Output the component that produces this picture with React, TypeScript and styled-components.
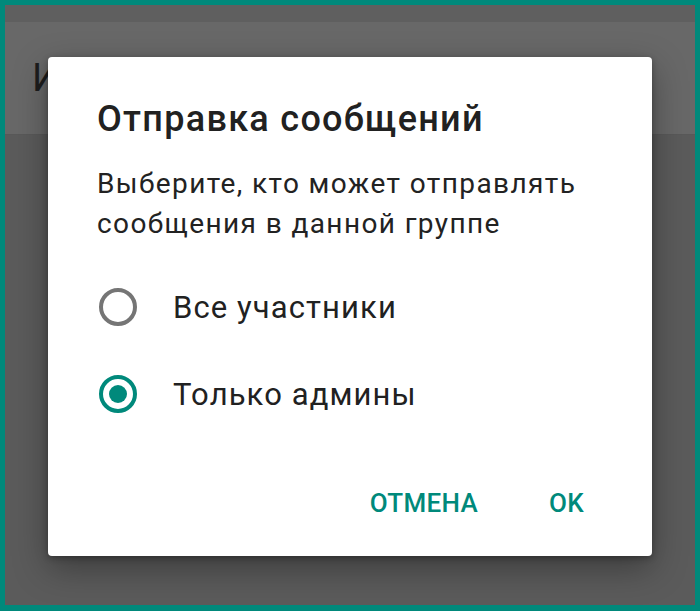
import React, { useState } from "react";
import styled, { createGlobalStyle } from "styled-components";

const Global = createGlobalStyle`
  html, body {
    margin: 0;
    padding: 0;
    font-family: Roboto, "Noto Sans", sans-serif;
  }
`;

const Frame = styled.div`
  position: relative;
  width: 700px;
  height: 611px;
  box-sizing: border-box;
  border: 5px solid #00897b;
  border-bottom-width: 6px;
  background: #5d5d5d;
  display: flex;
  flex-direction: column;
  overflow: hidden;
`;

const StatusBar = styled.div`
  height: 17px;
  background: #5f5f5f;
`;

const Toolbar = styled.div`
  height: 112px;
  background: #686868;
  border-bottom: 1px solid #595959;
  display: flex;
  align-items: center;
  padding-left: 27px;
  font-size: 38px;
  color: #1d1d1d;
`;

const Backdrop = styled.div`
  flex: 1;
  background: #5b5b5b;
`;

const Dialog = styled.div`
  position: absolute;
  left: 43px;
  top: 52px;
  width: 604px;
  height: 499px;
  box-sizing: border-box;
  background: #fff;
  border-radius: 4px;
  box-shadow: 0 12px 34px rgba(0, 0, 0, 0.35), 0 2px 6px rgba(0, 0, 0, 0.3);
  padding: 40px 48px 0 49px;
  display: flex;
  flex-direction: column;
`;

const Title = styled.h2`
  margin: 0;
  font-size: 36px;
  font-weight: 500;
  letter-spacing: 1.3px;
  color: #212121;
  line-height: 44px;
`;

const Message = styled.p`
  margin: 23px 0 0;
  font-size: 28px;
  letter-spacing: 1.4px;
  line-height: 40px;
  color: #222;
`;

const Options = styled.div`
  margin-top: 44px;
  display: flex;
  flex-direction: column;
  gap: 49px;
`;

const Option = styled.label`
  display: flex;
  align-items: center;
  gap: 36px;
  font-size: 31px;
  letter-spacing: 1.1px;
  color: #212121;
  cursor: pointer;
  height: 38px;
  margin-left: 2px;
`;

const Radio = styled.span<{ $checked: boolean }>`
  flex: none;
  width: 38px;
  height: 38px;
  box-sizing: border-box;
  border-radius: 50%;
  border: 4px solid ${(p) => (p.$checked ? "#00897b" : "#757575")};
  display: flex;
  align-items: center;
  justify-content: center;
  &::after {
    content: "";
    width: 18px;
    height: 18px;
    border-radius: 50%;
    background: #00897b;
    display: ${(p) => (p.$checked ? "block" : "none")};
  }
`;

const Actions = styled.div`
  margin-top: auto;
  margin-bottom: 38px;
  display: flex;
  justify-content: flex-end;
  gap: 71px;
  padding-right: 20px;
`;

const ActionButton = styled.button`
  border: none;
  background: none;
  padding: 0;
  font-family: Roboto, "Noto Sans", sans-serif;
  font-size: 26px;
  font-weight: 500;
  letter-spacing: 0.3px;
  color: #00897b;
  cursor: pointer;
`;

const options = ["Все участники", "Только админы"];

export default function App() {
  const [selected, setSelected] = useState(1);
  return (
    <>
      <Global />
      <Frame>
        <StatusBar />
        <Toolbar>И</Toolbar>
        <Backdrop />
        <Dialog>
          <Title>Отправка сообщений</Title>
          <Message>
            Выберите, кто может отправлять
            <br />
            сообщения в данной группе
          </Message>
          <Options>
            {options.map((o, i) => (
              <Option key={o} onClick={() => setSelected(i)}>
                <Radio $checked={selected === i} />
                {o}
              </Option>
            ))}
          </Options>
          <Actions>
            <ActionButton>ОТМЕНА</ActionButton>
            <ActionButton>OK</ActionButton>
          </Actions>
        </Dialog>
      </Frame>
    </>
  );
}
